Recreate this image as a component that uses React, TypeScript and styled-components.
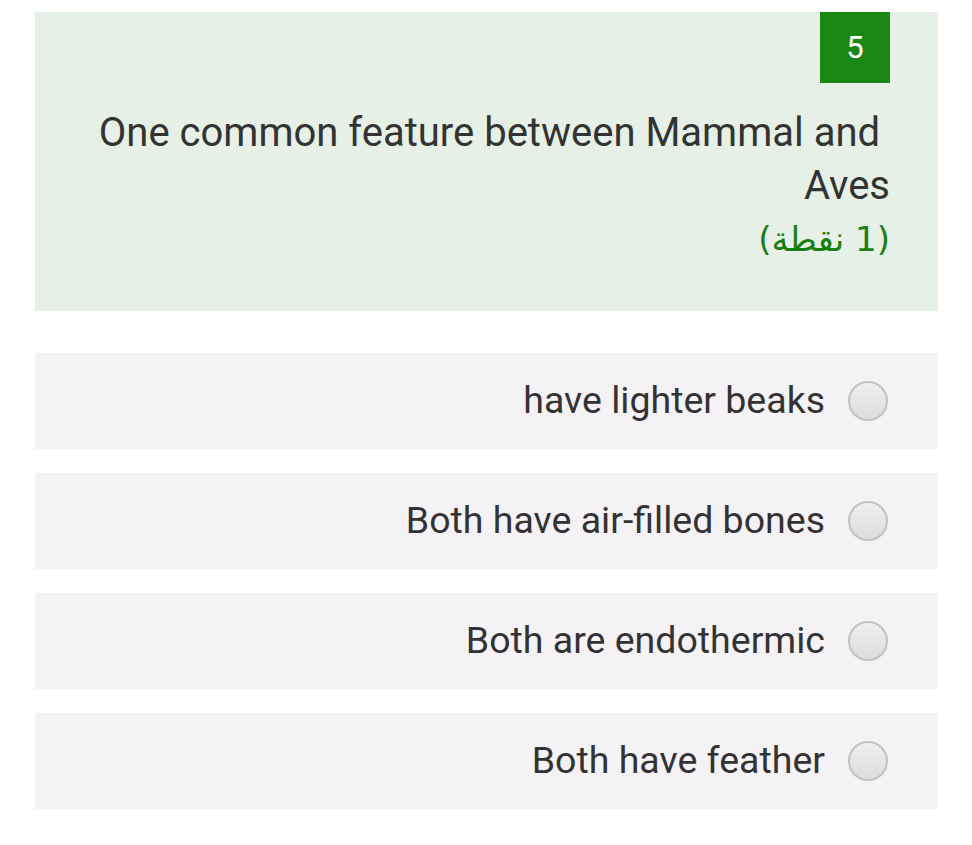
import styled, { createGlobalStyle } from "styled-components";

const GlobalStyle = createGlobalStyle`
  html, body {
    margin: 0;
    padding: 0;
    background: #ffffff;
  }
  body {
    font-family: Roboto, "Noto Sans", "DejaVu Sans", sans-serif;
  }
`;

const Page = styled.div`
  direction: rtl;
  padding: 12px 34px 38px 35px;
  display: flex;
  flex-direction: column;
`;

const QuestionCard = styled.div`
  background: #e6f0e6;
  padding: 0 48px 45px 48px;
  display: flex;
  flex-direction: column;
  align-items: flex-start;
  margin-bottom: 42px;
`;

const Badge = styled.div`
  width: 70px;
  height: 71px;
  background: #1a8813;
  color: #ffffff;
  font-size: 31px;
  display: flex;
  align-items: center;
  justify-content: center;
  margin-bottom: 23px;
`;

const QuestionText = styled.div`
  direction: ltr;
  white-space: break-spaces;
  font-size: 40px;
  line-height: 53px;
  color: #333333;
  text-align: right;
`;

const Points = styled.div`
  font-size: 34px;
  line-height: 54px;
  color: #1a7f12;
  font-family: "DejaVu Sans", sans-serif;
`;

const Options = styled.div`
  display: flex;
  flex-direction: column;
  gap: 24px;
`;

const OptionRow = styled.label`
  display: flex;
  align-items: center;
  gap: 23px;
  height: 96px;
  padding: 0 50px 0 0;
  background: #f5f2f5;
`;

const Radio = styled.span`
  width: 40px;
  height: 40px;
  border-radius: 50%;
  box-sizing: border-box;
  border: 2px solid #c2c2c2;
  background: linear-gradient(#eeeeee, #dddddd);
  flex-shrink: 0;
`;

const OptionText = styled.span`
  font-size: 37.5px;
  color: #333333;
  margin-top: -3px;
`;

const options = [
  "have lighter beaks",
  "Both have air-filled bones",
  "Both are endothermic",
  "Both have feather",
];

export default function App() {
  return (
    <>
      <GlobalStyle />
      <Page>
        <QuestionCard>
          <Badge>5</Badge>
          <QuestionText>One common feature between Mammal and Aves</QuestionText>
          <Points>(1 نقطة)</Points>
        </QuestionCard>
        <Options>
          {options.map((o) => (
            <OptionRow key={o}>
              <Radio />
              <OptionText>{o}</OptionText>
            </OptionRow>
          ))}
        </Options>
      </Page>
    </>
  );
}
